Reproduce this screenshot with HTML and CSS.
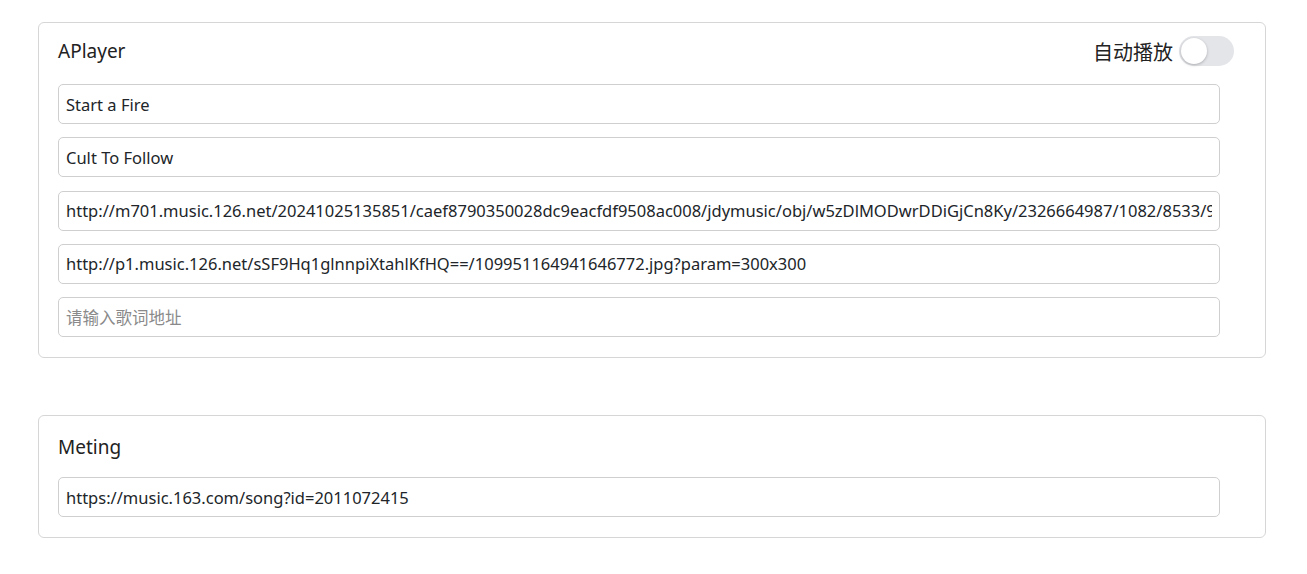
FILE: index.html
```html
<!DOCTYPE html>
<html lang="zh">
<head>
<meta charset="utf-8">
<title>Player</title>
<link rel="stylesheet" href="styles.css">
</head>
<body>
<div class="page">
  <section class="card">
    <div class="card-head">
      <h2 class="card-title">APlayer</h2>
      <label class="autoplay">
        <span class="autoplay-label">自动播放</span>
        <span class="switch"><span class="knob"></span></span>
      </label>
    </div>
    <input class="field" type="text" value="Start a Fire">
    <input class="field" type="text" value="Cult To Follow">
    <input class="field" type="text" value="http://m701.music.126.net/20241025135851/caef8790350028dc9eacfdf9508ac008/jdymusic/obj/w5zDlMODwrDDiGjCn8Ky/2326664987/1082/8533/9c2b0a7e8b1f4d6c.mp3">
    <input class="field" type="text" value="http://p1.music.126.net/sSF9Hq1glnnpiXtahlKfHQ==/109951164941646772.jpg?param=300x300">
    <input class="field" type="text" placeholder="请输入歌词地址">
  </section>
  <section class="card">
    <div class="card-head card-head--plain">
      <h2 class="card-title">Meting</h2>
    </div>
    <input class="field" type="text" value="https://music.163.com/song?id=2011072415">
  </section>
</div>
</body>
</html>
```

FILE: styles.css
```css
* { box-sizing: border-box; }
html, body {
  margin: 0;
  background: #ffffff;
}
body {
  font-family: "Noto Sans", "Noto Sans CJK SC", sans-serif;
  color: #212529;
}
.page {
  padding: 22px 41px 0 38px;
}
.card {
  border: 1px solid #d6d6d6;
  border-radius: 6px;
  padding: 12px 31px 20px 19px;
  display: flex;
  flex-direction: column;
  margin-bottom: 57px;
}
.card-head {
  display: flex;
  align-items: center;
  justify-content: space-between;
  height: 32px;
}
.card-head--plain {
  align-items: flex-end;
}
.card-title {
  margin: 0;
  font-size: 19px;
  font-weight: 400;
  color: #222;
  line-height: 32px;
}
.card-head--plain .card-title {
  line-height: 26px;
}
.autoplay {
  display: flex;
  align-items: center;
  gap: 6px;
}
.autoplay-label {
  font-size: 20px;
  color: #222;
  font-family: "Noto Sans CJK SC", sans-serif;
}
.switch {
  width: 55px;
  height: 30px;
  border-radius: 15px;
  background: #e4e5e9;
  display: flex;
  align-items: center;
  padding-left: 2px;
}
.knob {
  width: 26px;
  height: 26px;
  border-radius: 50%;
  background: #fff;
  box-shadow: 0 1px 3px rgba(0,0,0,0.25);
}
.field {
  display: block;
  height: 40px;
  margin: 17px 14px 0 0;
  padding: 0 7px;
  border: 1px solid #cfcfcf;
  border-radius: 5px;
  font-family: "Noto Sans", "Noto Sans CJK SC", sans-serif;
  font-size: 16.5px;
  color: #212529;
  background: #fff;
  outline: none;
}
.field + .field {
  margin-top: 13.25px;
}
.field::placeholder {
  color: #8a8a8a;
}
```
